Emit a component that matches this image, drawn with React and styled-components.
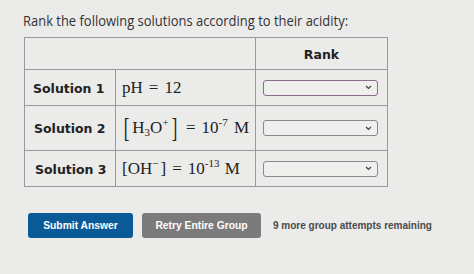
import React from 'react';
import styled, { createGlobalStyle } from 'styled-components';

const Global = createGlobalStyle`
	html, body {
		margin: 0;
		padding: 0;
		background: #ebebea;
	}
`;

const Page = styled.div`
	width: 474px;
	height: 274px;
	box-sizing: border-box;
	padding: 11px 0 0 23px;
	background: #ebebea;
	overflow: hidden;
`;

const Title = styled.p`
	margin: 0;
	font-family: 'Open Sans', sans-serif;
	font-size: 14px;
	line-height: 20px;
	color: #333;
	white-space: nowrap;
	transform: scaleX(0.925);
	transform-origin: left center;
`;

const Table = styled.table`
	margin: 6px 0 0 1px;
	border-collapse: collapse;
	border: 1.5px solid #9a9a9a;
	table-layout: fixed;
	width: 363px;
`;

const Cell = styled.td`
	border: 1px solid #9a9a9a;
	padding: 0 0 0 ${(p) => p.$pad || 0}px;
	height: ${(p) => p.$h}px;
	text-align: ${(p) => p.$align || 'left'};
	vertical-align: middle;
	box-sizing: border-box;
	white-space: nowrap;
`;

const Label = styled.span`
	font-family: 'DejaVu Sans', Verdana, sans-serif;
	font-weight: bold;
	font-size: ${(p) => p.$size || 12.5}px;
	color: #222;
`;

const Formula = styled.span`
	font-family: 'Liberation Serif', 'Times New Roman', serif;
	font-size: 17px;
	color: #222;
	line-height: 1;
`;

const Bracket = styled.span`
	display: inline-block;
	font-size: ${(p) => p.$size || 17}px;
	line-height: 1;
	vertical-align: ${(p) => (p.$size ? '-4px' : 'baseline')};
	transform: scaleX(${(p) => (p.$size ? 0.6 : 1)});
	margin: 0 ${(p) => (p.$size ? 1 : 0)}px;
`;

const Eq = styled.span`
	margin: 0 6px;
`;

const Sup = styled.span`
	font-size: 11px;
	vertical-align: 7px;
	line-height: 0;
	margin-right: ${(p) => p.$mr || 0}px;
`;

const Sub = styled.span`
	font-size: 11px;
	vertical-align: -3px;
	line-height: 0;
`;

const Select = styled.div`
	width: 115px;
	height: 16px;
	margin-left: 7px;
	box-sizing: border-box;
	border: ${(p) => (p.$focus ? '1.5px solid #8c6a8c' : '1px solid #8a8a8a')};
	border-radius: 3px;
	background: #efefee;
	display: flex;
	align-items: center;
	justify-content: flex-end;
	padding-right: 5px;
`;

const Actions = styled.div`
	display: flex;
	align-items: center;
	margin: 26px 0 0 5px;
`;

const Button = styled.div`
	height: 25px;
	width: ${(p) => p.$w}px;
	margin-right: ${(p) => p.$mr}px;
	border-radius: 3px;
	background: ${(p) => p.$bg};
	color: #fff;
	font-family: 'Liberation Sans', Arial, sans-serif;
	font-weight: bold;
	font-size: 10.3px;
	display: flex;
	align-items: center;
	justify-content: center;
`;

const Remaining = styled.span`
	font-family: 'Liberation Sans', Arial, sans-serif;
	font-weight: bold;
	font-size: 10px;
	color: #4a4a4a;
`;

const Chevron = () => (
	<svg width="7" height="5" viewBox="0 0 7 5">
		<path d="M1 1 L3.5 3.5 L6 1" fill="none" stroke="#444" strokeWidth="1.2" />
	</svg>
);

export default function App() {
	return (
		<Page>
			<Global />
			<Title>Rank the following solutions according to their acidity:</Title>
			<Table>
				<colgroup>
					<col style={{ width: 91 }} />
					<col style={{ width: 140 }} />
					<col style={{ width: 132 }} />
				</colgroup>
				<tbody>
					<tr>
						<Cell colSpan={2} $h={32} />
						<Cell $h={32} $align="center">
							<Label $size={12.5}>Rank</Label>
						</Cell>
					</tr>
					<tr>
						<Cell $h={36} $pad={8}>
							<Label>Solution 1</Label>
						</Cell>
						<Cell $h={36} $pad={6}>
							<Formula>
								pH<Eq>=</Eq>12
							</Formula>
						</Cell>
						<Cell $h={36}>
							<Select $focus>
								<Chevron />
							</Select>
						</Cell>
					</tr>
					<tr>
						<Cell $h={45} $pad={9}>
							<Label>Solution 2</Label>
						</Cell>
						<Cell $h={45} $pad={5}>
							<Formula>
								<Bracket $size={28}>[</Bracket>
								H<Sub>3</Sub>O<Sup>+</Sup>
								<Bracket $size={28}>]</Bracket>
								<Eq>=</Eq>10<Sup $mr={2}>-7</Sup> M
							</Formula>
						</Cell>
						<Cell $h={45}>
							<Select>
								<Chevron />
							</Select>
						</Cell>
					</tr>
					<tr>
						<Cell $h={36} $pad={10}>
							<Label>Solution 3</Label>
						</Cell>
						<Cell $h={36} $pad={6}>
							<Formula>
								<Bracket>[</Bracket>
								OH<Sup $mr={2}>−</Sup>
								<Bracket>]</Bracket>
								<Eq>=</Eq>10<Sup $mr={1}>-13</Sup> M
							</Formula>
						</Cell>
						<Cell $h={36}>
							<Select>
								<Chevron />
							</Select>
						</Cell>
					</tr>
				</tbody>
			</Table>
			<Actions>
				<Button $w={105} $mr={9} $bg="#0b5a98">
					Submit Answer
				</Button>
				<Button $w={119} $mr={12} $bg="#7b7b7b">
					Retry Entire Group
				</Button>
				<Remaining>9 more group attempts remaining</Remaining>
			</Actions>
		</Page>
	);
}
